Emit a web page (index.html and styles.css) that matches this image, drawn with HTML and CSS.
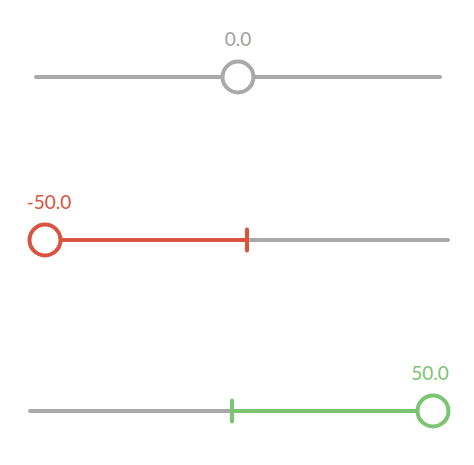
FILE: index.html
```html
<!DOCTYPE html>
<html lang="en">
<head>
    <meta charset="UTF-8">
    <meta name="viewport" content="width=device-width, initial-scale=1.0">
    <title>Sliders</title>
    <link rel="stylesheet" href="styles.css">
</head>
<body>
    <main class="sliders">
        <!-- plain slider, thumb in the middle -->
        <div class="slider slider-plain">
            <div class="rail">
                <span class="value" style="left: 50%;">0.0</span>
                <span class="thumb" style="left: 50%;"></span>
            </div>
        </div>

        <!-- centred slider, pulled to the left -->
        <div class="slider slider-low">
            <div class="rail">
                <span class="fill" style="left: 0%; width: 52%;"></span>
                <span class="tick" style="left: 52%;"></span>
                <span class="value" style="left: 0%; margin-left: 4px;">-50.0</span>
                <span class="thumb" style="left: 0%;"></span>
            </div>
        </div>

        <!-- centred slider, pushed to the right -->
        <div class="slider slider-high">
            <div class="rail">
                <span class="fill" style="left: 48.2%; width: 51.8%;"></span>
                <span class="tick" style="left: 48.2%;"></span>
                <span class="value" style="left: 100%; margin-left: -3px;">50.0</span>
                <span class="thumb" style="left: 100%;"></span>
            </div>
        </div>
    </main>
</body>
</html>
```

FILE: styles.css
```css
body {
    margin: 0;
    padding: 0;
    background-color: #ffffff;
    font-family: Lato, "Open Sans", sans-serif;
}

.sliders {
    display: flex;
    flex-direction: column;
    min-height: 100vh;
    padding-top: 75px;
    box-sizing: border-box;
}

.slider {
    position: relative;
    flex: none;
    height: 4px;
    margin: 0 24px 0 28px;
    background: #a9a9a9;
    border-radius: 2px;
}

.slider-plain {
    margin: 0 32px 0 34px;
}

.slider-low {
    margin-top: 159px;
}

.slider-high {
    margin-top: 167px;
}

/* the part of the track the thumb centre can travel on */
.rail {
    position: absolute;
    top: 0;
    bottom: 0;
    left: 17px;
    right: 17px;
}

.thumb {
    position: absolute;
    top: 50%;
    width: 27px;
    height: 27px;
    border: 4px solid #a9a9a9;
    border-radius: 50%;
    background: #fff;
    transform: translate(-50%, -50%);
}

.value {
    position: absolute;
    bottom: calc(100% + 27px);
    font-size: 19px;
    line-height: 1;
    color: #a0a0a0;
    transform: translateX(-50%);
    white-space: nowrap;
}

.fill {
    position: absolute;
    top: 0;
    height: 4px;
}

.tick {
    position: absolute;
    top: 50%;
    width: 4px;
    height: 25px;
    border-radius: 2px;
    transform: translate(-50%, -50%);
}

.slider-low .fill,
.slider-low .tick {
    background: #d9533e;
}

.slider-low .thumb {
    border-color: #d9533e;
}

.slider-low .value {
    color: #d9533e;
}

.slider-high .fill,
.slider-high .tick {
    background: #7bc472;
}

.slider-high .thumb {
    border-color: #7bc472;
}

.slider-high .value {
    color: #7bc472;
}
```
